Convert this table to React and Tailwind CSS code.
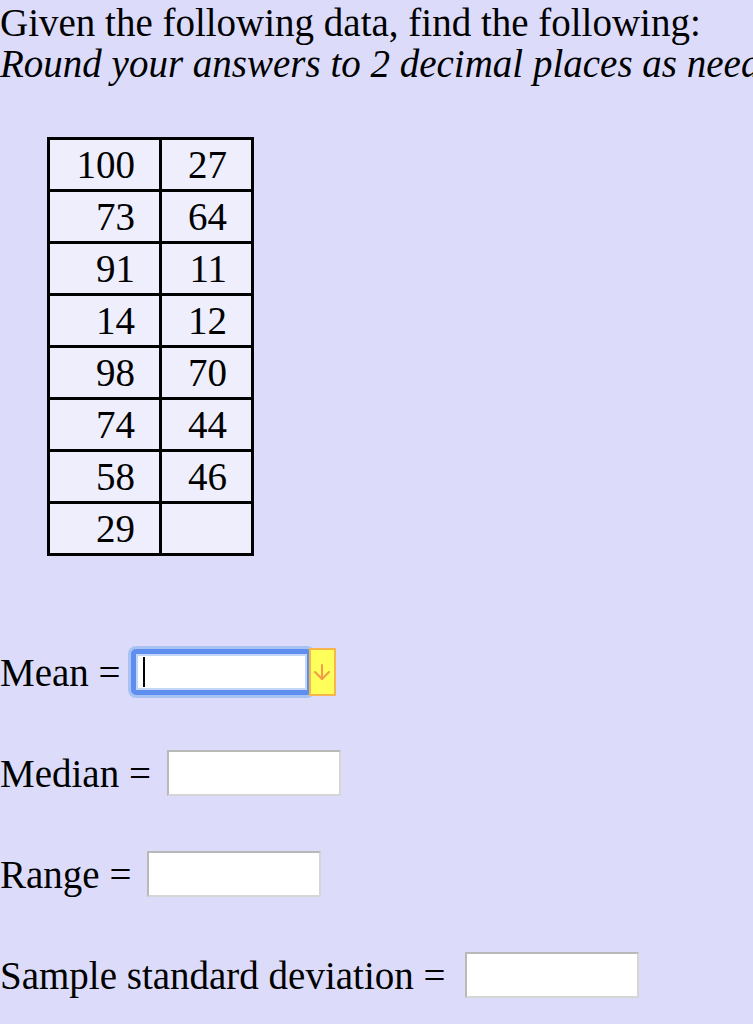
import { useState } from "react";

const data = [
  ["100", "27"],
  ["73", "64"],
  ["91", "11"],
  ["14", "12"],
  ["98", "70"],
  ["74", "44"],
  ["58", "46"],
  ["29", ""],
];

const boxCls =
  "w-[174px] h-[46px] bg-white border-2 border-t-[#b9b9b9] border-l-[#b9b9b9] border-r-[#d6d6d6] border-b-[#d6d6d6] outline-none";

const App = () => {
  const [answers, setAnswers] = useState({ median: "", range: "", sd: "" });

  const setField = (key) => (e) =>
    setAnswers({ ...answers, [key]: e.target.value });

  return (
    <div className="min-h-screen w-[753px] overflow-hidden bg-[#dcdcfa] text-black font-['Liberation_Serif',serif] text-[39px] leading-[41px]">
      <div className="pt-[2px] whitespace-nowrap">
        <p>Given the following data, find the following:</p>
        <p className="italic">Round your answers to 2 decimal places as needed.</p>
      </div>

      <table className="mt-[53px] ml-[47px] border-collapse border-[3px] border-black bg-[#eeeefd]">
        <tbody>
          {data.map((row, i) => (
            <tr key={i}>
              <td className="border-[3px] border-black w-[112px] h-[52px] p-0 pr-[24px] text-right leading-none">
                {row[0]}
              </td>
              <td className="border-[3px] border-black w-[92px] h-[52px] p-0 pr-[24px] text-right leading-none">
                {row[1]}
              </td>
            </tr>
          ))}
        </tbody>
      </table>

      <div className="mt-[92px] flex flex-col gap-[53px]">
        <div className="flex items-center h-[48px]">
          <span>Mean =</span>
          <div className="ml-[10px] w-[181px] h-[46px] bg-white border-[5px] border-[#5f8fee] rounded-[5px] shadow-[0_0_0_3px_#a9c2f4,inset_0_0_0_2px_#c4d6f8] flex items-center pl-[7px]">
            <span className="block w-[2px] h-[30px] bg-black"></span>
          </div>
          <div className="-ml-[3px] w-[27px] h-[48px] bg-[#ffff5c] border-2 border-[#f6b64a] flex items-center justify-center">
            <svg width="18" height="20" viewBox="0 0 18 20" fill="none" stroke="#f49a4a" strokeWidth="2" strokeLinecap="round" strokeLinejoin="round">
              <path d="M9 3v14" />
              <path d="M2 10l7 7 7-7" />
            </svg>
          </div>
        </div>

        <div className="flex items-center h-[48px]">
          <span>Median =</span>
          <input className={"ml-[16px] " + boxCls} value={answers.median} onChange={setField("median")} />
        </div>

        <div className="flex items-center h-[48px]">
          <span>Range =</span>
          <input className={"ml-[16px] " + boxCls} value={answers.range} onChange={setField("range")} />
        </div>

        <div className="flex items-center h-[48px]">
          <span>Sample standard deviation =</span>
          <input className={"ml-[20px] " + boxCls} value={answers.sd} onChange={setField("sd")} />
        </div>
      </div>
    </div>
  );
};

export default App;
